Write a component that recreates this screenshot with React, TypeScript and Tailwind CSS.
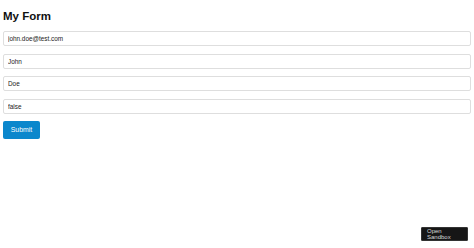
import { useState } from 'react'

const fields = [
  { name: 'email', value: 'john.doe@test.com' },
  { name: 'firstName', value: 'John' },
  { name: 'lastName', value: 'Doe' },
  { name: 'agree', value: 'false' },
]

export default function App() {
  const [values, setValues] = useState<Record<string, string>>(
    Object.fromEntries(fields.map(f => [f.name, f.value]))
  )
  return (
    <div className="relative h-[248px] w-full bg-white px-[3px] pt-[10px] font-['Liberation_Sans',Arial,sans-serif] text-black">
      <h1 className="text-[11.5px] font-bold leading-[12px] text-[#111]">My Form</h1>
      <form className="mt-[9px] flex flex-col gap-[7.5px]" onSubmit={e => e.preventDefault()}>
        {fields.map(f => (
          <input
            key={f.name}
            name={f.name}
            value={values[f.name]}
            onChange={e => setValues({ ...values, [f.name]: e.target.value })}
            className="h-[15px] w-full rounded-[2px] border border-[#dedede] px-[4px] text-[6.4px] leading-none text-[#222] outline-none"
          />
        ))}
        <button
          type="submit"
          className="h-[18px] w-[37px] rounded-[2px] bg-[#0b87cc] text-[6.9px] leading-none text-white"
        >
          Submit
        </button>
      </form>
      <button className="absolute bottom-[7px] right-[6px] flex h-[14px] w-[47px] flex-col items-start justify-center rounded-[1px] border border-[#333] bg-[#161616] pl-[5px] text-[6px] leading-[6.5px] text-[#d8d8d8]">
        <span>Open</span>
        <span>Sandbox</span>
      </button>
    </div>
  )
}
